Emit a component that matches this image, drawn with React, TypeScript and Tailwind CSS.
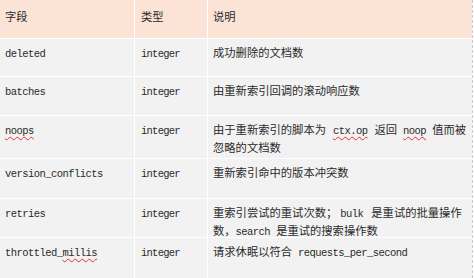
import React from 'react';

type Row = { field: React.ReactNode; type: string; desc: React.ReactNode; h: string };

const mono = { fontFamily: '"Liberation Mono", "DejaVu Sans Mono", monospace' };

const Code = ({ children, wavy, className = '' }: { children: React.ReactNode; wavy?: boolean; className?: string }) => (
  <span
    className={`text-[10.5px] leading-[16px] tracking-[-0.55px] ${wavy ? 'underline decoration-wavy decoration-[#e03030] decoration-1 underline-offset-2' : ''} ${className}`}
    style={mono}
  >
    {children}
  </span>
);

const rows: Row[] = [
  { field: 'deleted', type: 'integer', desc: '成功删除的文档数', h: 'h-[38px]' },
  { field: 'batches', type: 'integer', desc: '由重新索引回调的滚动响应数', h: 'h-[39px]' },
  {
    field: <Code wavy>noops</Code>,
    type: 'integer',
    desc: (
      <>
        由于重新索引的脚本为<Code wavy className="mx-[7px]">ctx.op</Code>返回<Code wavy className="mx-[6px]">noop</Code>值而被
        <br />
        忽略的文档数
      </>
    ),
    h: 'h-[43px]',
  },
  { field: 'version_conflicts', type: 'integer', desc: '重新索引命中的版本冲突数', h: 'h-[40px]' },
  {
    field: 'retries',
    type: 'integer',
    desc: (
      <>
        重索引尝试的重试次数；<Code className="ml-[3px] mr-[8px]">bulk</Code>是重试的批量操作
        <br />
        数，<Code className="mr-[6px]">search</Code>是重试的搜索操作数
      </>
    ),
    h: 'h-[39px]',
  },
  {
    field: (
      <>
        throttled_<Code wavy>millis</Code>
      </>
    ),
    type: 'integer',
    desc: (
      <>
        请求休眠以符合<Code className="ml-[6px]">requests_per_second</Code>
      </>
    ),
    h: 'h-[41px]',
  },
];

export default function App() {
  const cjk = { fontFamily: '"Noto Sans CJK SC", "Noto Sans", sans-serif' };
  return (
    <div className="w-[474px] h-[278px] bg-white overflow-hidden text-[#2a2a2a]" style={cjk}>
      <div className="w-[473px] border-r border-dashed border-[#c9c9c9]">
        <div className="grid grid-cols-[135px_73px_1fr] h-[38px] bg-[#fbe4d5] text-[11.3px] leading-[17px]">
          <div className="pl-[5px] pt-[8px] border-r border-white">字段</div>
          <div className="pl-[6px] pt-[8px] border-r border-white">类型</div>
          <div className="pl-[5px] pt-[8px]">说明</div>
        </div>
        {rows.map((r, i) => (
          <div
            key={i}
            className={`grid grid-cols-[135px_73px_1fr] ${r.h} bg-[#f2f2f2] border-t border-white text-[11.3px] leading-[16.5px]`}
          >
            <div className="pl-[5px] pt-[5px] border-r border-white">
              <span className="text-[10.5px] leading-[16px] tracking-[-0.55px]" style={mono}>{r.field}</span>
            </div>
            <div className="pl-[6px] pt-[5px] border-r border-white">
              <span className="text-[10.5px] leading-[16px] tracking-[-0.75px]" style={mono}>{r.type}</span>
            </div>
            <div className="pl-[5px] pr-[2px] pt-[5px]">{r.desc}</div>
          </div>
        ))}
      </div>
    </div>
  );
}
